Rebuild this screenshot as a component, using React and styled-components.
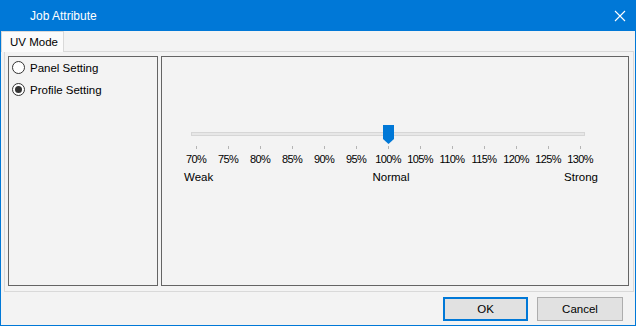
import React from "react";
import styled, { createGlobalStyle } from "styled-components";

const Global = createGlobalStyle`
  html, body { margin: 0; padding: 0; background: #f3f3f3; }
  body { font-family: "Liberation Sans", Arial, sans-serif; font-size: 12px; color: #000; }
`;

const Window = styled.div`
  width: 636px;
  height: 326px;
  box-sizing: border-box;
  border: 1px solid #0078d7;
  border-top: none;
  background: #f3f3f3;
  display: flex;
  flex-direction: column;
`;

const TitleBar = styled.div`
  height: 31px;
  margin: 0 -1px;
  background: #0078d7;
  color: #fff;
  display: flex;
  align-items: center;
  padding-left: 30px;
  padding-right: 9px;
  font-size: 12px;
`;

const TitleText = styled.div`
  flex: 1;
  padding-top: 1px;
`;

const Close = styled.div`
  width: 12px;
  height: 12px;
  display: flex;
  margin-right: 1px;
`;

const TabStrip = styled.div`
  height: 20px;
  display: flex;
  align-items: flex-end;
`;

const Tab = styled.div`
  box-sizing: border-box;
  width: 63px;
  height: 21px;
  border: 1px solid #d9d9d9;
  border-bottom: none;
  background: #fbfbfb;
  padding-left: 8px;
  display: flex;
  align-items: center;
  position: relative;
  z-index: 1;
  margin-bottom: -1px;
  font-size: 11.5px;
`;

const TabPanel = styled.div`
  margin: 0 1px 0 3px;
  height: 241px;
  box-sizing: border-box;
  border: 1px solid #d9d9d9;
  background: #f3f3f3;
  padding: 4px 4px 6px 3px;
  display: grid;
  grid-template-columns: 150px 468px;
  column-gap: 3px;
`;

const Box = styled.div`
  border: 1px solid #646464;
  box-sizing: border-box;
  height: 230px;
  position: relative;
`;

const RadioList = styled.div`
  display: flex;
  flex-direction: column;
  gap: 9px;
  padding: 4px 0 0 3px;
`;

const RadioRow = styled.label`
  display: flex;
  align-items: center;
  gap: 5px;
  height: 13px;
  font-size: 11.5px;
`;

const RadioCircle = styled.span`
  width: 13px;
  height: 13px;
  box-sizing: border-box;
  border-radius: 50%;
  border: 1px solid #333;
  background: #fff;
  display: flex;
  align-items: center;
  justify-content: center;
  &::after {
    content: "";
    width: 7px;
    height: 7px;
    border-radius: 50%;
    background: ${(p) => (p.$checked ? "#333" : "transparent")};
  }
`;

const SliderArea = styled.div`
  position: relative;
  padding: 75px 0 0 29px;
`;

const Track = styled.div`
  width: 394px;
  height: 4px;
  box-sizing: border-box;
  border: 1px solid #d6d6d6;
  background: #e7e7e7;
`;

const Thumb = styled.div`
  position: absolute;
  left: ${(p) => p.$x}px;
  top: 68px;
  width: 11px;
  height: 19px;
  display: flex;
`;

const TickRow = styled.div`
  display: flex;
  margin-left: -11px;
  margin-top: 10px;
`;

const Tick = styled.div`
  width: 32px;
  display: flex;
  flex-direction: column;
  align-items: center;
  &::before {
    content: "";
    width: 1px;
    height: 3px;
    background: #b4b4b4;
    margin-bottom: 4px;
  }
`;

const TickLabel = styled.span`
  font-size: 11px;
  letter-spacing: -0.6px;
  white-space: nowrap;
`;

const Captions = styled.div`
  display: flex;
  justify-content: space-between;
  width: 414px;
  margin-left: -7px;
  margin-top: 6px;
  font-size: 11.5px;
`;

const Caption = styled.span`
  width: 60px;
  text-align: ${(p) => p.$align};
`;

const ButtonBar = styled.div`
  flex: 1;
  display: flex;
  justify-content: flex-end;
  align-items: flex-start;
  gap: 9px;
  padding: 5px 12px 0 0;
`;

const Button = styled.div`
  width: ${(p) => p.$w}px;
  height: 24px;
  box-sizing: border-box;
  background: #e1e1e1;
  border: ${(p) => (p.$default ? "2px solid #0078d7" : "1px solid #adadad")};
  display: flex;
  align-items: center;
  justify-content: center;
  font-size: 11.5px;
`;

const ticks = [70, 75, 80, 85, 90, 95, 100, 105, 110, 115, 120, 125, 130];

export default function App() {
  return (
    <>
      <Global />
      <Window>
        <TitleBar>
          <TitleText>Job Attribute</TitleText>
          <Close>
            <svg width="12" height="12" viewBox="0 0 12 12">
              <path d="M1 1 L11 11 M11 1 L1 11" stroke="#fff" strokeWidth="1.1" />
            </svg>
          </Close>
        </TitleBar>
        <TabStrip>
          <Tab>UV Mode</Tab>
        </TabStrip>
        <TabPanel>
          <Box>
            <RadioList>
              <RadioRow>
                <RadioCircle />
                Panel Setting
              </RadioRow>
              <RadioRow>
                <RadioCircle $checked />
                Profile Setting
              </RadioRow>
            </RadioList>
          </Box>
          <Box>
            <SliderArea>
              <Track />
              <Thumb $x={221}>
                <svg width="11" height="19" viewBox="0 0 11 19">
                  <path d="M0 0 H11 V14 L5.5 19 L0 14 Z" fill="#0078d7" />
                </svg>
              </Thumb>
              <TickRow>
                {ticks.map((t) => (
                  <Tick key={t}>
                    <TickLabel>{t}%</TickLabel>
                  </Tick>
                ))}
              </TickRow>
              <Captions>
                <Caption $align="left">Weak</Caption>
                <Caption $align="center">Normal</Caption>
                <Caption $align="right">Strong</Caption>
              </Captions>
            </SliderArea>
          </Box>
        </TabPanel>
        <ButtonBar>
          <Button $w={85} $default>OK</Button>
          <Button $w={86}>Cancel</Button>
        </ButtonBar>
      </Window>
    </>
  );
}
